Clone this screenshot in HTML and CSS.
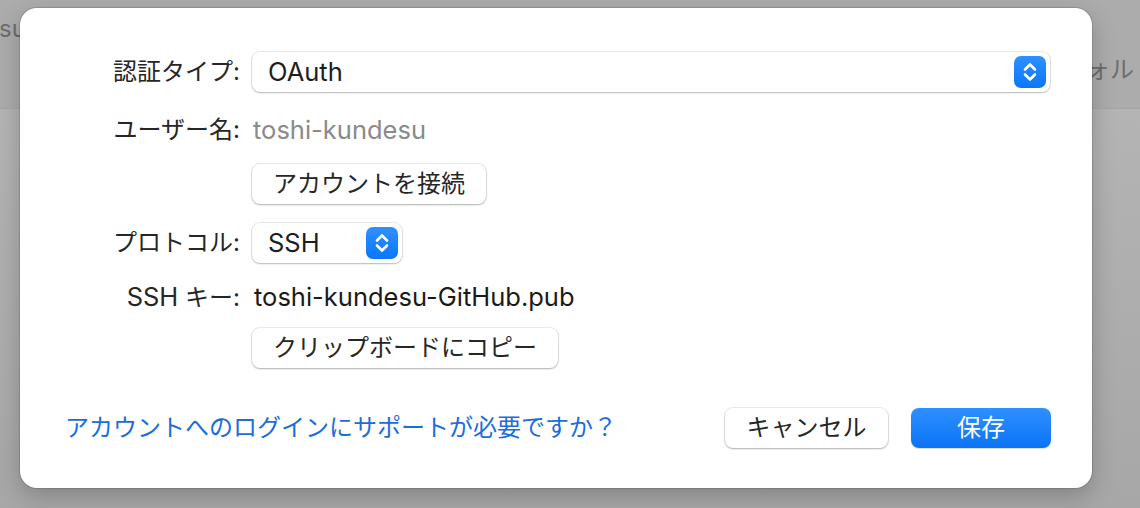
FILE: index.html
```html
<!DOCTYPE html>
<html lang="ja">
<head>
  <meta charset="UTF-8">
  <title>アカウント設定</title>
  <meta name="viewport" content="width=device-width, initial-scale=1.0">
  <link rel="stylesheet" href="styles.css">
</head>
<body>
  <!-- window behind the sheet -->
  <div class="backdrop">
    <div class="toolbar">
      <span class="tb-left">su</span>
      <span class="tb-right">ォル</span>
    </div>
    <div class="content"></div>
  </div>

  <section class="sheet">
    <div class="form">
      <div class="row row-1">
        <label class="label">認証タイプ:</label>
        <div class="popup popup-wide">
          <span class="popup-text latin">OAuth</span>
          <span class="stepper">
            <svg width="16" height="22" viewBox="0 0 16 22"><path d="M3 8.5 L8 3.5 L13 8.5 M3 13.5 L8 18.5 L13 13.5" fill="none" stroke="#fff" stroke-width="2.6" stroke-linecap="round" stroke-linejoin="round"/></svg>
          </span>
        </div>
      </div>
      <div class="row row-2">
        <label class="label">ユーザー名:</label>
        <span class="value muted latin">toshi-kundesu</span>
      </div>
      <div class="row row-3">
        <span></span>
        <button class="btn btn-connect">アカウントを接続</button>
      </div>
      <div class="row row-4">
        <label class="label">プロトコル:</label>
        <div class="popup popup-small">
          <span class="popup-text latin">SSH</span>
          <span class="stepper">
            <svg width="16" height="22" viewBox="0 0 16 22"><path d="M3 8.5 L8 3.5 L13 8.5 M3 13.5 L8 18.5 L13 13.5" fill="none" stroke="#fff" stroke-width="2.6" stroke-linecap="round" stroke-linejoin="round"/></svg>
          </span>
        </div>
      </div>
      <div class="row row-5">
        <label class="label"><span class="latin">SSH</span> キー:</label>
        <span class="value latin">toshi-kundesu-GitHub.pub</span>
      </div>
      <div class="row row-6">
        <span></span>
        <button class="btn btn-copy">クリップボードにコピー</button>
      </div>
    </div>

    <div class="footer">
      <a class="help" href="#">アカウントへのログインにサポートが必要ですか？</a>
      <div class="actions">
        <button class="btn btn-cancel">キャンセル</button>
        <button class="btn btn-primary">保存</button>
      </div>
    </div>
  </section>
</body>
</html>
```

FILE: styles.css
```css
:root{
  --text:#262626;
  --muted:#8a8a8a;
  --blue:#0a7aff;
  --link:#1a6ddb;
}
*{box-sizing:border-box;}
html, body{
  margin:0; padding:0;
  width:100%; height:100%;
  overflow:hidden;
  font-family:Inter,"Noto Sans CJK JP",sans-serif;
  line-height:1;
  color:var(--text);
  position:relative;
}
.latin{ font-size:25.5px; }

/* dimmed window behind */
.backdrop{
  height:100%;
  display:flex; flex-direction:column;
  background:#adadad;
}
.toolbar{
  height:109px;
  display:flex; justify-content:space-between; align-items:flex-start;
  background:#acacac;
  border-bottom:1px solid #a6a6a6;
  color:#6d6d6d;
  font-size:24px;
}
.tb-left{ margin-left:-1px; margin-top:17px; }
.tb-right{ margin-right:6px; margin-top:58px; }
.content{
  flex:1;
  background:linear-gradient(180deg,#b4b4b4,#a7a7a7);
}

/* sheet */
.sheet{
  position:absolute;
  left:20px; top:8px;
  width:1072px; height:480px;
  padding:44px 41px 0 45px;
  background:#fff;
  border-radius:17px;
  box-shadow:0 0 0 1px rgba(0,0,0,0.12),0 8px 24px rgba(0,0,0,0.22);
  display:flex; flex-direction:column;
}
.form{ display:flex; flex-direction:column; }
.row{
  display:grid;
  grid-template-columns:175px 1fr;
  column-gap:12px;
  align-items:center;
  height:40px;
  font-size:24px;
}
.row-2{ margin-top:18px; }
.row-3{ margin-top:14px; }
.row-4{ margin-top:19px; }
.row-5{ margin-top:14px; }
.row-6{ margin-top:11px; }
.label{ text-align:right; white-space:nowrap; }
.value{ padding-left:2px; color:#1a1a1a; white-space:nowrap; }
.value.muted{ color:var(--muted); padding-left:1px; }

/* pop-up buttons */
.popup{
  height:40px;
  display:flex; align-items:center; justify-content:space-between;
  padding:0 4px 0 16px;
  background:#fff;
  border-radius:8px;
  box-shadow:0 0 0 1px rgba(0,0,0,0.08),0 1px 2px rgba(0,0,0,0.22);
}
.popup-wide{ width:798px; }
.popup-small{ width:150px; }
.popup-text{ color:#1e1e1e; }
.stepper{
  width:32px; height:32px;
  border-radius:7px;
  display:flex; align-items:center; justify-content:center;
  background:linear-gradient(180deg,#2f90ff,#0a77fb);
}

/* push buttons */
.btn{
  height:40px;
  font:inherit;
  font-size:24px;
  color:var(--text);
  background:#fff;
  border:none;
  border-radius:8px;
  box-shadow:0 0 0 1px rgba(0,0,0,0.08),0 1px 2px rgba(0,0,0,0.25);
  padding:0;
  cursor:pointer;
  justify-self:start;
}
.btn-connect{ width:234px; }
.btn-copy{ width:306px; }

.footer{
  margin-top:40px;
  display:flex; align-items:center; justify-content:space-between;
}
.help{
  color:var(--link);
  text-decoration:none;
  font-size:24px;
}
.actions{ display:flex; gap:23px; }
.btn-cancel{ width:163px; }
.btn-primary{
  width:140px;
  color:#fff;
  background:linear-gradient(180deg,#2f8fff,#0a74f6);
  box-shadow:0 1px 1px rgba(0,0,0,0.15);
}
```
